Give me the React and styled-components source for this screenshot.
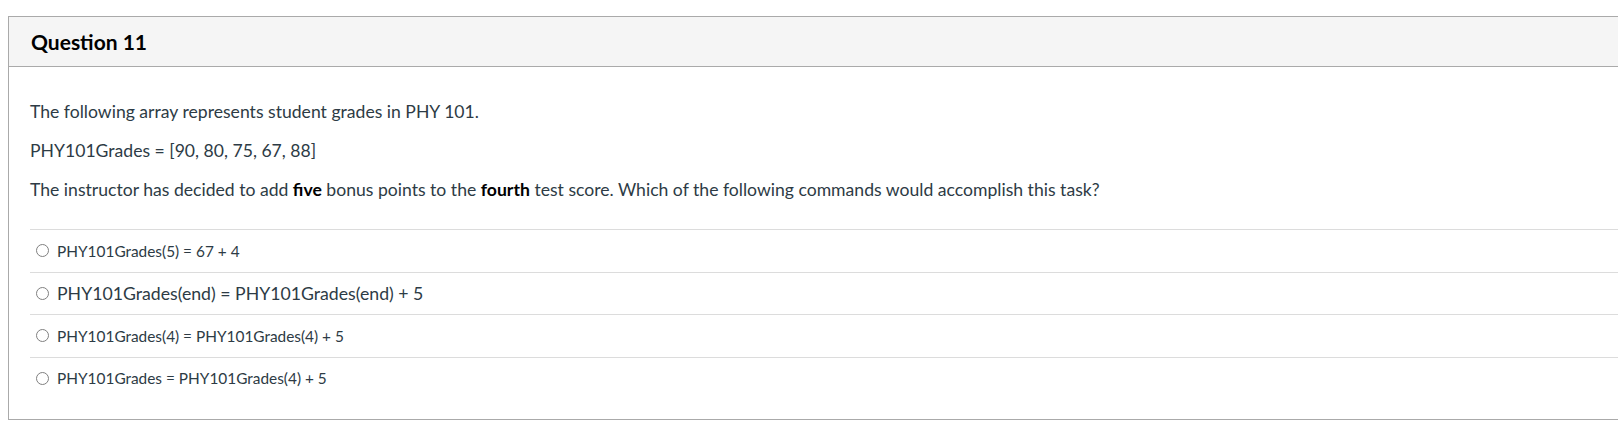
import React from "react";
import styled, { createGlobalStyle } from "styled-components";

const GlobalStyle = createGlobalStyle`
  html, body {
    margin: 0;
    padding: 0;
    background: #fff;
    overflow: hidden;
  }
  body {
    font-family: Lato, "Open Sans", "Liberation Sans", sans-serif;
    color: #2d3b45;
  }
`;

const Page = styled.div`
  padding: 16px 0 0 8px;
`;

const Card = styled.div`
  border: 1px solid #aaaaaa;
  border-right: none;
  background: #fff;
`;

const Header = styled.div`
  display: flex;
  align-items: center;
  height: 49px;
  padding-left: 22px;
  background: #f5f5f5;
  border-bottom: 1px solid #aaaaaa;
`;

const Title = styled.h2`
  margin: 0;
  font-size: 21px;
  font-weight: 700;
  color: #000;
`;

const Body = styled.div`
  padding: 32px 0 20px 21px;
`;

const Text = styled.p`
  margin: 0 0 13px;
  font-size: 17.6px;
  line-height: 26px;
  color: #2d3b45;
  b {
    font-weight: 700;
    color: #000;
  }
`;

const Answers = styled.div`
  margin-top: 26px;
`;

const Answer = styled.label`
  display: flex;
  align-items: center;
  gap: 8px;
  min-height: 41.5px;
  padding-left: 6px;
  border-top: 1px solid #dcdcdc;
  font-size: ${(p) => (p.big ? "17.7px" : "15.4px")};
  color: #2d3b45;
`;

const Radio = styled.span`
  width: 11px;
  height: 11px;
  border: 1px solid #808080;
  border-radius: 50%;
  flex-shrink: 0;
`;

const answers = [
  { text: "PHY101Grades(5) = 67 + 4" },
  { text: "PHY101Grades(end) = PHY101Grades(end) + 5", big: true },
  { text: "PHY101Grades(4) = PHY101Grades(4) + 5" },
  { text: "PHY101Grades = PHY101Grades(4) + 5" },
];

const App = () => {
  return (
    <>
      <GlobalStyle />
      <Page>
        <Card>
          <Header>
            <Title>Question 11</Title>
          </Header>
          <Body>
            <Text>The following array represents student grades in PHY 101.</Text>
            <Text>PHY101Grades = [90, 80, 75, 67, 88]</Text>
            <Text>
              The instructor has decided to add <b>five</b> bonus points to the{" "}
              <b>fourth</b> test score. Which of the following commands would
              accomplish this task?
            </Text>
            <Answers>
              {answers.map((a, i) => (
                <Answer key={i} big={a.big}>
                  <Radio />
                  {a.text}
                </Answer>
              ))}
            </Answers>
          </Body>
        </Card>
      </Page>
    </>
  );
};

export default App;
